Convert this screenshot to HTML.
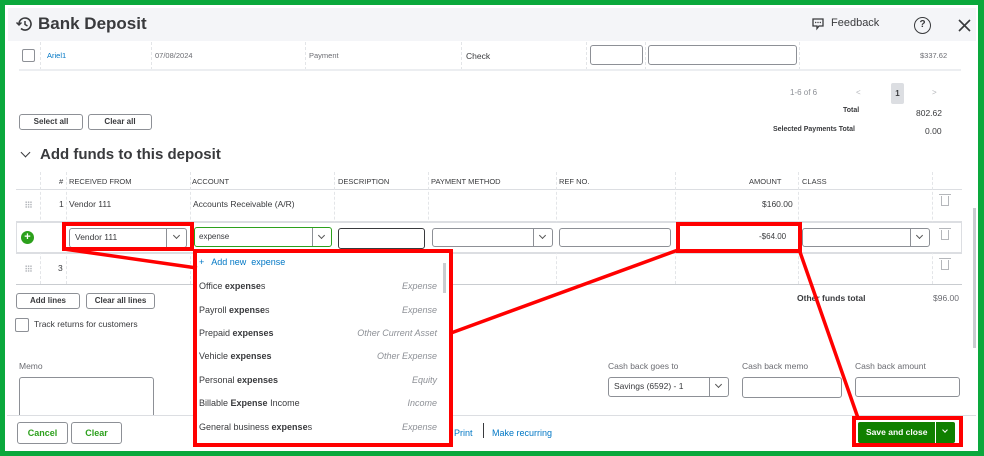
<!DOCTYPE html>
<html><head><meta charset="utf-8"><style>
*{box-sizing:border-box;margin:0;padding:0}
body{width:984px;height:456px;overflow:hidden;background:#0aa83c;font-family:"Liberation Sans",sans-serif;color:#393a3d;position:relative}
.a{position:absolute}
.win{position:absolute;left:5px;top:5px;width:973px;height:446px;background:#fff}
.t{position:absolute;font-size:9px;white-space:nowrap;line-height:1}
.btn{position:absolute;border:1px solid #8d9096;border-radius:3px;background:#fff;font-size:8px;font-weight:bold;text-align:center;color:#393a3d}
.inp{position:absolute;border:1px solid #8d9096;border-radius:3px;background:#fff}
.vs{position:absolute;border-left:1px dashed #e3e5e8;}
.hl{position:absolute;height:1px;background:#dcdee2}
.red{position:absolute;border:4px solid #f00}
.chev{position:absolute;width:5px;height:5px;border-right:1px solid #555;border-bottom:1px solid #555;transform:rotate(45deg)}
.it{position:absolute;left:199px;font-size:9px;color:#393a3d;white-space:nowrap}
.ty{position:absolute;right:547px;font-size:9px;color:#8d9096;font-style:italic;white-space:nowrap}
.hd{position:absolute;top:177px;font-size:7.5px;color:#393a3d;white-space:nowrap}
.trash{position:absolute;width:8px;height:10px;border:1px solid #b5b7bb;border-top:none}
.trash:before{content:"";position:absolute;left:-3px;top:-2px;width:12px;height:1px;background:#b5b7bb}
.grip{position:absolute;width:7px;height:7px;background-image:radial-gradient(#b0b3b8 0.8px,transparent 0.9px);background-size:2.4px 2.4px}
</style></head><body>
<div class="win"></div>
<!-- header -->
<div class="a" style="left:8px;top:8px;width:968px;height:33px;background:#f4f5f8"></div>
<svg class="a" style="left:15px;top:16px" width="18" height="16" viewBox="0 0 18 16"><path d="M4 8a6 6 0 1 1 2 4.5" fill="none" stroke="#393a3d" stroke-width="1.6"/><path d="M1.5 6.5L4 9 6.5 6.5" fill="none" stroke="#393a3d" stroke-width="1.5"/><path d="M10 5v3.5l2.5 1.5" fill="none" stroke="#393a3d" stroke-width="1.5"/></svg>
<div class="t" style="left:38px;top:15px;font-size:17px;font-weight:bold;color:#393a3d">Bank Deposit</div>
<svg class="a" style="left:811px;top:17px" width="14" height="14" viewBox="0 0 14 14"><path d="M2 2h10v7H8l-2 2.5V9H2z" fill="none" stroke="#393a3d" stroke-width="1.3"/><circle cx="4.7" cy="5.5" r=".7" fill="#393a3d"/><circle cx="7" cy="5.5" r=".7" fill="#393a3d"/><circle cx="9.3" cy="5.5" r=".7" fill="#393a3d"/></svg>
<div class="t" style="left:831px;top:18px;font-size:11px">Feedback</div>
<div class="a" style="left:914px;top:17px;width:17px;height:17px;border:1.5px solid #393a3d;border-radius:50%;font-size:10px;font-weight:bold;text-align:center;line-height:14px">?</div>
<svg class="a" style="left:958px;top:19px" width="13" height="13"><path d="M1 1L12 12M12 1L1 12" stroke="#393a3d" stroke-width="1.6"/></svg>
<!-- top row -->
<div class="inp" style="left:22px;top:49px;width:13px;height:13px;border-radius:2px"></div>
<div class="vs" style="left:40px;top:42px;height:28px"></div>
<div class="vs" style="left:151px;top:42px;height:28px"></div>
<div class="vs" style="left:305px;top:42px;height:28px"></div>
<div class="vs" style="left:461px;top:42px;height:28px"></div>
<div class="vs" style="left:586px;top:42px;height:28px"></div>
<div class="vs" style="left:645px;top:42px;height:28px"></div>
<div class="vs" style="left:799px;top:42px;height:28px"></div>
<div class="t" style="left:47px;top:52px;font-size:7.5px;color:#0077c5">Ariel1</div>
<div class="t" style="left:155px;top:52px;font-size:7.5px;color:#6b6c72">07/08/2024</div>
<div class="t" style="left:309px;top:52px;font-size:7.5px;color:#6b6c72">Payment</div>
<div class="t" style="left:466px;top:52px;font-size:8.5px">Check</div>
<div class="inp" style="left:590px;top:45px;width:53px;height:20px"></div>
<div class="inp" style="left:648px;top:45px;width:149px;height:20px"></div>
<div class="t" style="left:920px;top:52px;font-size:7.5px;color:#6b6c72">$337.62</div>
<div class="hl" style="left:19px;top:69px;width:942px;height:2px;background:#eceef1"></div>
<!-- pagination -->
<div class="t" style="left:790px;top:89px;font-size:8px;color:#8d9096">1-6 of 6</div>
<div class="t" style="left:856px;top:89px;font-size:8px;color:#b5b7bb">&lt;</div>
<div class="a" style="left:891px;top:83px;width:13px;height:21px;background:#dcdee2;border-radius:2px;font-size:8px;font-weight:bold;text-align:center;line-height:21px">1</div>
<div class="t" style="left:932px;top:89px;font-size:8px;color:#b5b7bb">&gt;</div>
<div class="t" style="left:843px;top:107px;font-size:7px;font-weight:bold">Total</div>
<div class="t" style="left:916px;top:109px;font-size:8.5px">802.62</div>
<div class="t" style="left:773px;top:126px;font-size:7px;font-weight:bold">Selected Payments Total</div>
<div class="t" style="left:925px;top:127px;font-size:8.5px">0.00</div>
<div class="btn" style="left:19px;top:114px;width:64px;height:16px;line-height:14px">Select all</div>
<div class="btn" style="left:88px;top:114px;width:64px;height:16px;line-height:14px">Clear all</div>
<!-- add funds -->
<div class="chev" style="left:22px;top:149px;width:7px;height:7px;border-width:1.6px;border-color:#393a3d"></div>
<div class="t" style="left:40px;top:147px;font-size:15px;font-weight:bold;color:#393a3d">Add funds to this deposit</div>
<div class="hl" style="left:16px;top:189px;width:946px"></div>
<div class="hl" style="left:16px;top:221px;width:946px"></div>
<div class="hl" style="left:16px;top:253px;width:946px"></div>
<div class="hl" style="left:16px;top:284px;width:946px;background:#c9ccd0"></div>
<div class="vs" style="left:40px;top:172px;height:112px"></div>
<div class="vs" style="left:66px;top:172px;height:112px"></div>
<div class="vs" style="left:190px;top:172px;height:112px"></div>
<div class="vs" style="left:334px;top:172px;height:112px"></div>
<div class="vs" style="left:428px;top:172px;height:112px"></div>
<div class="vs" style="left:556px;top:172px;height:112px"></div>
<div class="vs" style="left:675px;top:172px;height:112px"></div>
<div class="vs" style="left:798px;top:172px;height:112px"></div>
<div class="vs" style="left:932px;top:172px;height:112px"></div>
<div class="a" style="left:16px;top:222px;width:946px;height:31px;border:1px solid #dcdee2;background:#fff"></div>
<div class="hd" style="left:59px">#</div>
<div class="hd" style="left:69px">RECEIVED FROM</div>
<div class="hd" style="left:192px">ACCOUNT</div>
<div class="hd" style="left:338px">DESCRIPTION</div>
<div class="hd" style="left:431px">PAYMENT METHOD</div>
<div class="hd" style="left:559px">REF NO.</div>
<div class="hd" style="left:749px">AMOUNT</div>
<div class="hd" style="left:802px">CLASS</div>
<div class="grip" style="left:25px;top:201px"></div>
<div class="t" style="left:59px;top:200px;font-size:8.5px">1</div>
<div class="t" style="left:69px;top:200px;font-size:8.5px">Vendor 111</div>
<div class="t" style="left:193px;top:200px;font-size:8.5px">Accounts Receivable (A/R)</div>
<div class="t" style="left:762px;top:200px;font-size:8.5px">$160.00</div>
<div class="trash" style="left:941px;top:196px"></div>
<div class="a" style="left:21px;top:231px;width:13px;height:13px;border-radius:50%;background:#2ca01c;color:#fff;font-size:11px;font-weight:bold;text-align:center;line-height:13px">+</div>
<div class="inp" style="left:69px;top:228px;width:118px;height:20px"></div>
<div class="a" style="left:166px;top:228px;width:1px;height:20px;background:#8d9096"></div>
<div class="t" style="left:75px;top:233px;font-size:8.5px">Vendor 111</div>
<div class="chev" style="left:174px;top:233px"></div>
<div class="inp" style="left:194px;top:227px;width:138px;height:20px;border-color:#2ca01c"></div>
<div class="a" style="left:312px;top:228px;width:1px;height:18px;background:#8d9096"></div>
<div class="t" style="left:199px;top:233px;font-size:8px">expense</div>
<div class="chev" style="left:319px;top:233px"></div>
<div class="inp" style="left:338px;top:228px;width:87px;height:21px;border-color:#393a3d"></div>
<div class="inp" style="left:432px;top:228px;width:121px;height:19px"></div>
<div class="a" style="left:533px;top:228px;width:1px;height:19px;background:#8d9096"></div>
<div class="chev" style="left:540px;top:233px"></div>
<div class="inp" style="left:559px;top:228px;width:112px;height:19px"></div>
<div class="t" style="left:759px;top:233px;font-size:8px">-$64.00</div>
<div class="inp" style="left:802px;top:228px;width:128px;height:19px"></div>
<div class="a" style="left:910px;top:228px;width:1px;height:19px;background:#8d9096"></div>
<div class="chev" style="left:917px;top:233px"></div>
<div class="trash" style="left:941px;top:230px"></div>
<div class="grip" style="left:25px;top:265px"></div>
<div class="t" style="left:58px;top:264px;font-size:8.5px">3</div>
<div class="trash" style="left:941px;top:260px"></div>
<div class="btn" style="left:16px;top:293px;width:64px;height:16px;line-height:14px">Add lines</div>
<div class="btn" style="left:86px;top:293px;width:69px;height:16px;line-height:14px">Clear all lines</div>
<div class="t" style="left:797px;top:294px;font-size:8.5px;font-weight:bold">Other funds total</div>
<div class="t" style="left:933px;top:294px;font-size:8.5px;color:#6b6c72">$96.00</div>
<div class="inp" style="left:15px;top:318px;width:14px;height:14px;border-radius:2px"></div>
<div class="t" style="left:34px;top:320px;font-size:8.5px">Track returns for customers</div>
<div class="a" style="left:973px;top:208px;width:3px;height:140px;background:#c9ccd0"></div>
<!-- memo -->
<div class="t" style="left:19px;top:362px;font-size:8.5px;color:#6b6c72">Memo</div>
<div class="inp" style="left:19px;top:377px;width:135px;height:45px"></div>
<div class="t" style="left:608px;top:362px;font-size:8.5px;color:#6b6c72">Cash back goes to</div>
<div class="inp" style="left:608px;top:377px;width:121px;height:20px"></div>
<div class="a" style="left:709px;top:377px;width:1px;height:20px;background:#8d9096"></div>
<div class="t" style="left:614px;top:382px;font-size:8.5px">Savings (6592) - 1</div>
<div class="chev" style="left:716px;top:382px"></div>
<div class="t" style="left:742px;top:362px;font-size:8.5px;color:#6b6c72">Cash back memo</div>
<div class="inp" style="left:742px;top:377px;width:100px;height:21px"></div>
<div class="t" style="left:855px;top:362px;font-size:8.5px;color:#6b6c72">Cash back amount</div>
<div class="inp" style="left:855px;top:377px;width:105px;height:20px"></div>
<!-- footer -->
<div class="a" style="left:7px;top:415px;width:969px;height:36px;background:#fff;border-top:1px solid #dcdee2"></div>
<div class="btn" style="left:17px;top:422px;width:51px;height:22px;line-height:20px;color:#2ca01c;font-size:9px">Cancel</div>
<div class="btn" style="left:71px;top:422px;width:51px;height:22px;line-height:20px;color:#2ca01c;font-size:9px">Clear</div>
<div class="t" style="left:454px;top:429px;font-size:9px;color:#0077c5">Print</div>
<div class="a" style="left:483px;top:423px;width:1px;height:15px;background:#393a3d"></div>
<div class="t" style="left:492px;top:429px;font-size:9px;color:#0077c5">Make recurring</div>
<div class="a" style="left:858px;top:422px;width:97px;height:21px;background:#108000;border-radius:2px"></div>
<div class="a" style="left:935px;top:422px;width:1px;height:21px;background:#fff"></div>
<div class="t" style="left:866px;top:428px;font-size:8.5px;font-weight:bold;color:#fff">Save and close</div>
<div class="chev" style="left:943px;top:428px;border-color:#fff;width:4px;height:4px"></div>
<!-- dropdown -->
<div class="a" style="left:195px;top:251px;width:256px;height:194px;background:#fff"></div>
<div class="t" style="left:199px;top:258px;font-size:9px;color:#0077c5">+&nbsp;&nbsp; Add new&nbsp; expense</div>
<div class="it" style="top:281px">Office <b>expense</b>s</div><div class="ty" style="top:281px">Expense</div>
<div class="it" style="top:305px">Payroll <b>expense</b>s</div><div class="ty" style="top:305px">Expense</div>
<div class="it" style="top:328px">Prepaid <b>expenses</b></div><div class="ty" style="top:328px">Other Current Asset</div>
<div class="it" style="top:351px">Vehicle <b>expenses</b></div><div class="ty" style="top:351px">Other Expense</div>
<div class="it" style="top:375px">Personal <b>expenses</b></div><div class="ty" style="top:375px">Equity</div>
<div class="it" style="top:398px">Billable <b>Expense</b> Income</div><div class="ty" style="top:398px">Income</div>
<div class="it" style="top:422px">General business <b>expense</b>s</div><div class="ty" style="top:422px">Expense</div>
<div class="a" style="left:443px;top:263px;width:3px;height:30px;background:#c9ccd0"></div>
<!-- red annotations -->
<svg class="a" style="left:0;top:0" width="984" height="456"><g stroke="#f00" stroke-width="3.5"><line x1="64" y1="249" x2="197" y2="268"/><line x1="451" y1="333" x2="678" y2="250"/><line x1="800" y1="252" x2="858" y2="418"/></g></svg>
<div class="red" style="left:62px;top:222px;width:132px;height:29px"></div>
<div class="red" style="left:193px;top:249px;width:260px;height:198px"></div>
<div class="red" style="left:676px;top:222px;width:126px;height:31px"></div>
<div class="red" style="left:852px;top:416px;width:111px;height:31px"></div>
</body></html>
